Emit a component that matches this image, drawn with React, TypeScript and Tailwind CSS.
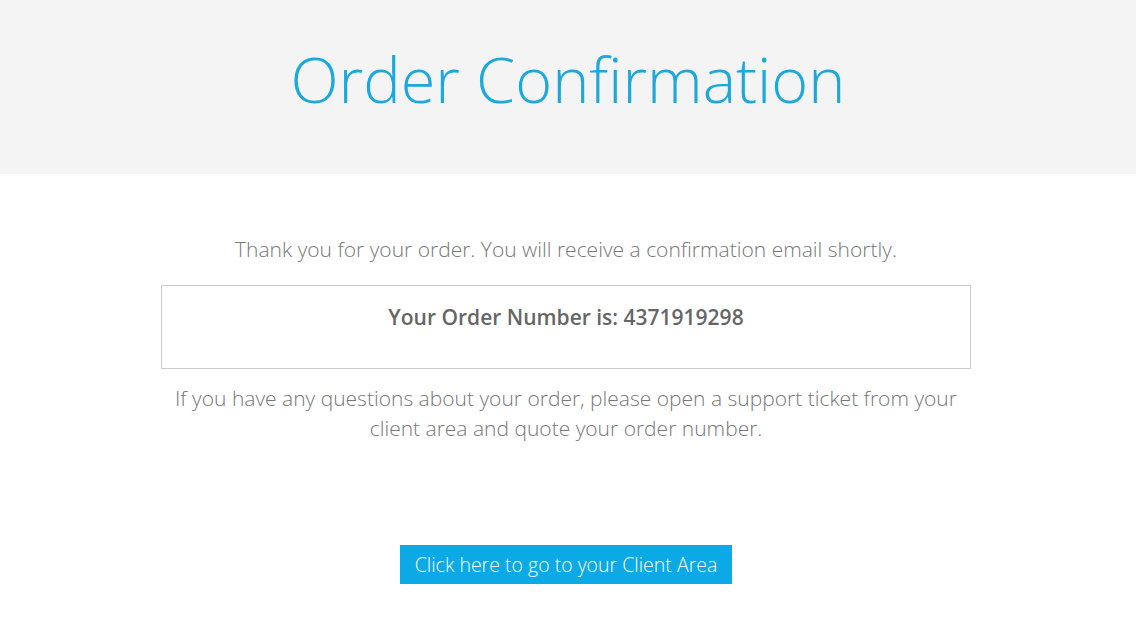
import React from 'react';

const App: React.FC = () => {
  const orderNumber = '4371919298';

  return (
    <div className="min-h-[629px] bg-white font-['Open_Sans',sans-serif] font-light">
      <div className="flex h-[174px] items-center justify-center bg-[#f4f4f4]">
        <h1 className="pb-[18px] text-[63px] font-light leading-none text-[#1ba8df]">Order Confirmation</h1>
      </div>

      <div className="ml-[161px] w-[810px] pt-[58px] text-center">
        <p className="text-[21px] leading-[34px] text-[#777]">
          Thank you for your order. You will receive a confirmation email shortly.
        </p>

        <div className="mt-[19px] h-[84px] border border-[#cccccc] pt-[14px]">
          <p className="text-[21px] font-semibold leading-[34px] text-[#666]">
            Your Order Number is: {orderNumber}
          </p>
        </div>

        <p className="mt-[14px] text-[21px] leading-[30px] text-[#777]">
          If you have any questions about your order, please open a support ticket from your client area and quote your order number.
        </p>

        <div className="mt-[102px] flex justify-center">
          <a
            href="#"
            className="flex h-[39px] items-center bg-[#0ba9e6] px-[15px] text-[19.5px] font-light text-white"
          >
            Click here to go to your Client Area
          </a>
        </div>
      </div>
    </div>
  );
};

export default App;
